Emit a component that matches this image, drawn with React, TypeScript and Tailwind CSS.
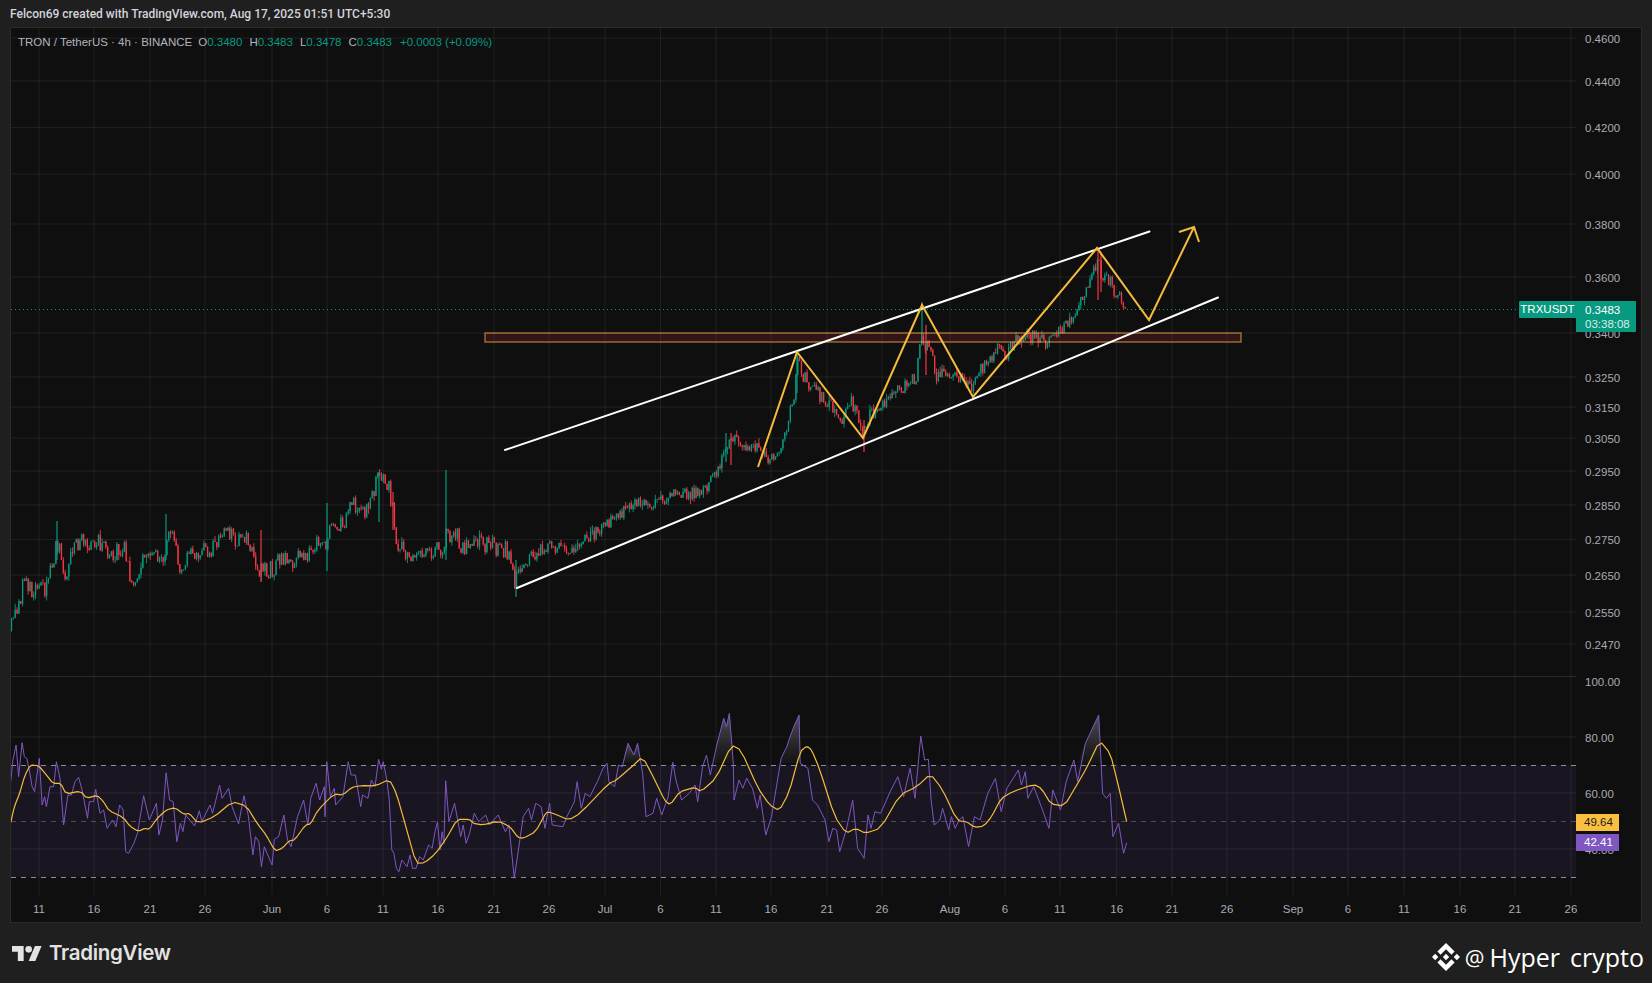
import React from "react";

const z6 = [33,540,40,480,60,470,68,400,85,420,105,430,120,380,135,420,150,370,165,300,180,290,190,400,205,340,220,300,240,260,260,310,290,270,320,320,350,300,370,300,385,390,410,370,425,300,445,320,470,310,490,330,495,230,525,300,530,370,560,310,590,310,625,300,660,240,680,245,710,275,730,250,750,320,775,370,800,360,845,320,865,350,890,320,920,310,940,280,962,285,968,260,985,240,1000,240,1030,190,1040,150,1085,185,1100,130,1120,90,1150,100,1165,200,1175,270,1190,290,1210,320,1250,325,1290,290,1315,310,1325,220,1335,280,1350,240,1365,300,1400,280,1440,280,1500,300,1515,330,1525,400,1568,320];
const shown = [520,518,540,522,560,510,580,495,600,478,620,477,640,470,665,467,680,450];
const z5 = [50,770,70,710,80,680,100,660,130,690,160,680,185,700,205,730,240,690,270,580,285,520,292,420,310,470,340,510,380,540,400,570,430,600,455,540,480,620,493,640,510,580,540,560,580,520,620,500,650,470,665,340,670,370,695,390,705,470,740,450,780,470,800,480,815,510,830,460,860,430,885,390,920,400,960,350,985,345,1020,355,1045,375,1070,340,1100,320,1130,280,1150,230,1180,150,1195,120,1210,180,1235,180,1245,250,1260,230,1272,280,1280,268];

function pairs(a: number[], fx: (x: number) => number, fy: (y: number) => number) {
  const out: [number, number][] = [];
  for (let i = 0; i < a.length; i += 2) out.push([fx(a[i]), fy(a[i + 1])]);
  return out;
}
const mid: [number, number][] = [
  ...pairs(z6, (x) => x / 2.96, (y) => 450 + y / 3),
  ...pairs(shown, (x) => x * 1.0536, (y) => y * 1.0536),
  ...pairs(z5, (x) => 700 + x / 3, (y) => 220 + y / 3),
];
function at(x: number) {
  for (let i = 1; i < mid.length; i++) {
    if (x <= mid[i][0]) {
      const [a, b] = [mid[i - 1], mid[i]];
      return a[1] + ((b[1] - a[1]) * (x - a[0])) / Math.max(b[0] - a[0], 0.01);
    }
  }
  return mid[mid.length - 1][1];
}
let seed = 77;
function rnd() {
  seed = (seed * 16807) % 2147483647;
  return seed / 2147483647;
}
type Bar = { x: number; o: number; c: number; h: number; l: number };
const bars: Bar[] = [];
{
  let prev = at(11);
  for (let x = 11.5; x <= 1127; x += 1.85) {
    const amp = x < 520 ? 9 : x < 700 ? 6 : 7;
    const c = at(x) + (rnd() - 0.5) * amp * 2;
    const h = Math.min(prev, c) - rnd() * rnd() * 6;
    const l = Math.max(prev, c) + rnd() * rnd() * 6;
    bars.push({ x, o: prev, c, h, l });
    prev = c;
  }
}
const GREEN = "#089981";
const RED = "#f23645";
const spikes: [number, number, number, string][] = [
  [327, 503, 571, GREEN], [446, 470, 560, GREEN], [516, 560, 597, GREEN], [57, 521, 560, GREEN], [166, 514, 560, GREEN],
  [922, 302, 343, GREEN], [797, 350, 393, GREEN], [864, 420, 452, RED], [1098, 250, 300, RED], [1101, 252, 292, RED],
  [379, 472, 522, GREEN], [393, 492, 530, RED], [261, 530, 582, RED], [926, 325, 375, RED], [726, 433, 462, GREEN], [731, 433, 465, RED],
];

const gridX = [39,94,150,205,272,327,383,438,494,549,605,660.5,716,771,827,882,950,1005,1060,1116.7,1172,1227,1293,1348,1404,1460,1515,1571];
const timeLabels = ["11","16","21","26","Jun","6","11","16","21","26","Jul","6","11","16","21","26","Aug","6","11","16","21","26","Sep","6","11","16","21","26"];
const prices: [string, number][] = [["0.4600",38],["0.4400",81],["0.4200",127.5],["0.4000",174],["0.3800",224],["0.3600",277],["0.3400",333],["0.3250",377],["0.3150",407],["0.3050",438],["0.2950",471],["0.2850",505],["0.2750",539.5],["0.2650",575],["0.2550",612],["0.2470",644]];
const rsiLabels: [string, number][] = [["100.00",681],["80.00",737.5],["60.00",793],["40.00",849]];

const p7 = [30,245,36,180,45,135,52,230,62,128,68,170,75,175,82,210,90,260,97,275,110,175,118,315,125,290,130,320,140,260,150,260,158,185,168,235,178,375,190,285,200,285,210,245,220,232,230,270,245,355,250,305,262,305,268,268,280,340,290,330,300,385,315,360,325,380,335,315,345,330,352,455,360,460,375,430,385,400,402,287,418,360,438,310,445,405,455,360,465,218,475,300,485,305,495,425,505,370,512,395,520,345,545,378,558,332,565,365,588,315,595,340,615,255,622,295,640,265,650,320,668,372,683,287,695,345,708,465,715,410,725,425,732,500,740,440,762,495,768,418,780,410,795,345,805,420,815,440,833,350,850,300,862,375,870,295,885,250,895,300,908,260,910,350,915,185,925,290,936,265,940,315,960,290,975,185,983,225,995,225,1010,320,1015,285,1030,295,1040,240,1050,260,1060,178,1068,208,1073,185,1083,240,1090,300,1097,450,1103,460,1110,505,1117,515,1125,480,1140,500,1148,465,1155,505,1165,505,1175,470,1185,480,1200,435,1210,445,1218,395,1225,365,1232,450,1238,395,1243,430,1248,242,1257,365,1273,310,1285,380,1290,410,1297,375,1305,430,1315,400,1328,340,1340,365,1360,345,1370,375,1395,345,1415,395,1425,375,1440,535,1465,350,1480,325,1488,360,1500,310,1515,320];
const p8 = [13,385,25,310,32,375,60,380,70,350,90,305,97,245,108,325,118,280,130,290,150,245,165,205,175,190,180,245,195,260,205,195,215,200,230,130,245,165,255,130,268,220,277,350,295,340,305,295,318,345,335,290,347,187,355,240,370,300,390,280,405,255,412,305,425,200,435,165,445,225,462,135,480,55,487,80,495,40,505,190,507,300,520,240,530,265,540,235,555,265,568,325,575,285,590,405,605,350,630,175,645,140,655,105,665,75,677,45,680,190,700,205,712,300,725,315,745,360,755,425,765,385,775,390,783,455,800,390,817,300,830,445,847,475,857,345,865,385,875,335,890,340,915,275,935,230,950,290,967,205,980,295,995,108,1005,180,1015,178,1022,300,1030,375,1045,360,1052,325,1068,390,1075,350,1085,385,1095,360,1105,350,1120,440,1135,350,1150,360,1170,280,1190,235,1205,335,1220,265,1250,210,1258,255,1268,215,1275,295,1290,260,1310,320,1330,385,1340,270,1360,330,1375,245,1395,180,1405,245,1425,130,1460,45,1470,280,1480,295,1490,280,1497,410,1512,370,1525,460,1533,428];
const y7 = [30,368,40,320,55,280,70,225,85,195,108,197,130,225,148,250,170,250,185,282,225,273,243,295,272,286,290,305,305,332,345,352,365,380,388,394,405,385,418,388,440,355,465,330,490,323,515,343,530,340,555,370,600,350,650,305,690,318,720,370,745,405,770,453,790,445,810,422,825,420,855,375,870,372,890,330,935,282,960,285,985,262,1010,257,1050,258,1090,238,1110,280,1135,375,1165,490,1190,488,1220,460,1250,415,1280,358,1315,358,1325,370,1352,375,1395,363,1428,380,1450,412,1465,415,1500,395,1525,345];
const y8 = [20,335,45,345,75,360,105,340,180,250,200,240,240,200,268,170,300,240,325,300,340,315,365,275,405,262,420,275,460,235,500,135,525,150,570,265,600,315,625,332,650,280,680,155,697,138,710,150,730,205,770,350,800,400,825,385,850,400,890,385,940,285,985,260,1020,222,1050,265,1090,362,1115,365,1135,382,1160,378,1180,350,1205,295,1235,275,1290,253,1310,265,1335,312,1370,318,1400,260,1430,200,1462,122,1490,160,1510,250,1533,365];

const fx7 = (x: number) => x / 2.8;
const fx8 = (x: number) => 540 + x / 2.613;
const fy = (y: number) => 700 + y / 3;
const toStr = (a: [number, number][]) => a.map(([x, y]) => `${x.toFixed(1)},${y.toFixed(1)}`).join(" ");
function chaikin(a: [number, number][]) {
  const out: [number, number][] = [a[0]];
  for (let i = 0; i < a.length - 1; i++) {
    out.push([a[i][0] * 0.8 + a[i + 1][0] * 0.2, a[i][1] * 0.8 + a[i + 1][1] * 0.2]);
    out.push([a[i][0] * 0.2 + a[i + 1][0] * 0.8, a[i][1] * 0.2 + a[i + 1][1] * 0.8]);
  }
  out.push(a[a.length - 1]);
  return out;
}
const purple = toStr([...pairs(p7, fx7, fy), ...pairs(p8, fx8, fy)]);
const yellow = toStr(chaikin([...pairs(y7, fx7, fy), ...pairs(y8, fx8, fy)]));
const overFills = [
  [[455,190],[462,135],[480,55],[487,80],[495,40],[505,190]],
  [[630,190],[630,175],[645,140],[655,105],[665,75],[677,45],[680,190]],
  [[1405,190],[1425,130],[1460,45],[1465,190]],
  [[215,190],[230,130],[245,165],[255,130],[262,190]],
].map((p) => toStr(p.map(([x, y]) => [fx8(x), fy(y)] as [number, number])));

const sans = "font-['Liberation_Sans',sans-serif]";

function GridV({ y1, y2 }: { y1: number; y2: number }) {
  return (
    <g stroke="#ffffff" strokeOpacity="0.07" strokeWidth="1">
      {gridX.map((x) => (
        <line key={x} x1={x} x2={x} y1={y1} y2={y2} />
      ))}
    </g>
  );
}

function PricePane() {
  return (
    <svg viewBox="11 28 1565 648" className="block w-[1565px] h-[648px]">
      <GridV y1={28} y2={676} />
      <g stroke="#ffffff" strokeOpacity="0.07" strokeWidth="1">
        {prices.map(([t, y]) => (
          <line key={t} x1={11} x2={1576} y1={y} y2={y} />
        ))}
      </g>
      <line x1={11} x2={1519} y1={309.5} y2={309.5} stroke={GREEN} strokeWidth="1" strokeDasharray="1 3" />
      {bars.map((b, i) => {
        const col = b.c < b.o ? GREEN : RED;
        return (
          <g key={i} stroke={col}>
            <line x1={b.x} x2={b.x} y1={b.h} y2={b.l} strokeWidth="0.9" />
            <line x1={b.x} x2={b.x} y1={b.o} y2={b.c} strokeWidth="1.3" />
          </g>
        );
      })}
      {spikes.map(([x, a, b, c], i) => (
        <line key={i} x1={x} x2={x} y1={a} y2={b} stroke={c} strokeWidth="1.2" />
      ))}
      <rect x={485} y={333} width={756} height={9} fill="#f23645" fillOpacity="0.15" stroke="#ffb74d" strokeOpacity="0.5" strokeWidth="1.6" />
      <g stroke="#ffffff" strokeWidth="2" strokeLinecap="round">
        <line x1={505} y1={450} x2={1149.5} y2={231.5} />
        <line x1={517} y1={588} x2={1218} y2={297.5} />
      </g>
      <polyline points="758,467 797,352 863,438 922,305 973,397 1097,248 1149,320 1194,227" fill="none" stroke="#f5bc3c" strokeWidth="2" strokeLinejoin="miter" />
      <polyline points="1179,232 1194,227 1199,242" fill="none" stroke="#f5bc3c" strokeWidth="2" />
    </svg>
  );
}

function RsiPane() {
  return (
    <svg viewBox="11 677 1565 218" className="block w-[1565px] h-[218px]">
      <defs>
        <linearGradient id="ob" x1="0" y1="0" x2="0" y2="1">
          <stop offset="0" stopColor="#6a6a72" stopOpacity="0.75" />
          <stop offset="1" stopColor="#3a3a3f" stopOpacity="0.15" />
        </linearGradient>
      </defs>
      <rect x={11} y={765} width={1565} height={112} fill="#191622" />
      <GridV y1={677} y2={895} />
      <g stroke="#ffffff" strokeOpacity="0.07" strokeWidth="1">
        {[737, 793, 849].map((y) => (
          <line key={y} x1={11} x2={1576} y1={y} y2={y} />
        ))}
      </g>
      <line x1={11} x2={1576} y1={765.5} y2={765.5} stroke="#8a8d96" strokeDasharray="5 5" />
      <line x1={11} x2={1576} y1={821.5} y2={821.5} stroke="#787b86" strokeOpacity="0.55" strokeDasharray="5 5" />
      <line x1={11} x2={1576} y1={877.5} y2={877.5} stroke="#8a8d96" strokeDasharray="5 5" />
      {overFills.map((p, i) => (
        <polygon key={i} points={p} fill="url(#ob)" />
      ))}
      <polyline points={purple} fill="none" stroke="#7e57c2" strokeWidth="1" strokeLinejoin="round" />
      <polyline points={yellow} fill="none" stroke="#f5bc3c" strokeWidth="1.2" strokeLinejoin="round" />
    </svg>
  );
}

function Legend() {
  const vals: [string, string][] = [["O", "0.3480"], ["H", "0.3483"], ["L", "0.3478"], ["C", "0.3483"]];
  return (
    <div className={`absolute left-[7px] top-[7px] flex items-center text-[11.5px] leading-[14px] text-[#b2b5be] ${sans}`}>
      <span>TRON / TetherUS · 4h · BINANCE</span>
      <span className="ml-[6px] flex gap-[7px]">
        {vals.map(([k, v]) => (
          <span key={k}>
            {k}
            <span className="text-[#089981]">{v}</span>
          </span>
        ))}
      </span>
      <span className="ml-[8px] text-[#089981]">+0.0003 (+0.09%)</span>
    </div>
  );
}

function AxisLabel({ t, y, base }: { t: string; y: number; base: number }) {
  return (
    <span className="absolute left-[9px] text-[11.5px] leading-[14px] text-[#a9abb2]" style={{ top: y - base - 6.5 }}>
      {t}
    </span>
  );
}

export default function App() {
  return (
    <div className={`w-[1652px] h-[983px] bg-[#1f1f1f] flex flex-col overflow-hidden ${sans}`}>
      <div className="h-[27px] pl-[10px] flex items-center font-['Roboto',sans-serif] text-[12px] font-medium text-[#d1d4dc]">
        Felcon69 created with TradingView.com, Aug 17, 2025 01:51 UTC+5:30
      </div>
      <div className="ml-[10px] w-[1632px] h-[896px] border border-[#2b2b2b] bg-[#0f0f0f] grid grid-cols-[1565px_65px] grid-rows-[649px_218px_27px]">
        <div className="relative border-b border-[#2a2a2a]">
          <PricePane />
          <Legend />
          <div className="absolute left-[1508px] top-[273px] w-[57px] h-[17px] bg-[#089981] rounded-l-[1px] flex items-center justify-center text-[11.5px] text-white">
            TRXUSDT
          </div>
        </div>
        <div className="relative">
          {prices.map(([t, y]) => (
            <AxisLabel key={t} t={t} y={y} base={28} />
          ))}
          <div className="absolute left-0 top-[273px] w-[60px] h-[31px] bg-[#089981] rounded-r-[1px] pl-[9px] pt-[2px] text-[11.5px] leading-[14px] text-white">
            <div>0.3483</div>
            <div className="text-[#d9efe9]">03:38:08</div>
          </div>
        </div>
        <div>
          <RsiPane />
        </div>
        <div className="relative">
          {rsiLabels.map(([t, y]) => (
            <AxisLabel key={t} t={t} y={y} base={677} />
          ))}
          <div className="absolute left-0 top-[137px] w-[43px] h-[17px] bg-[#fbbf3f] flex items-center pl-[8px] text-[11.5px] text-[#1a1a1a]">49.64</div>
          <div className="absolute left-0 top-[157px] w-[43px] h-[17px] bg-[#7e57c2] flex items-center pl-[8px] text-[11.5px] text-white">42.41</div>
        </div>
        <div className="relative">
          {gridX.map((x, i) => (
            <span key={i} className="absolute top-[7px] -translate-x-1/2 text-[11.5px] leading-[14px] text-[#a9abb2]" style={{ left: x - 11 }}>
              {timeLabels[i]}
            </span>
          ))}
        </div>
        <div />
      </div>
      <div className="flex-1 flex items-center justify-between pl-[12px] pr-[8px]">
        <div className="flex items-center gap-[7px]">
          <svg viewBox="0 0 36 18" className="w-[30px] h-[15px]" fill="#e3e3e3">
            <path d="M14 18H7V7H0V0h14v18zM28 18h-8l7.5-18h8L28 18z" />
            <circle cx="20" cy="4" r="4" />
          </svg>
          <span className="font-['Inter',sans-serif] font-semibold text-[20.5px] leading-none tracking-[-0.3px] text-[#e3e3e3]">TradingView</span>
        </div>
        <div className="flex items-center pt-[8px] text-white font-['Open_Sans',sans-serif] text-[25px] leading-none">
          <svg viewBox="0 0 126.61 126.61" className="w-[28px] h-[28px] mr-[5px]" fill="#ffffff">
            <path d="M38.73 53.2l24.59-24.58 24.6 24.6 14.3-14.31L63.32 0 24.42 38.9zM0 63.31l14.3-14.31 14.31 14.31-14.31 14.3zM38.73 73.41l24.59 24.59 24.6-24.6 14.31 14.29-38.9 38.91-38.91-38.88-.02-.02zM98 63.31l14.3-14.31 14.31 14.3-14.31 14.32zM77.83 63.3L63.32 48.78 52.59 59.51l-1.24 1.23-2.54 2.54 14.51 14.5 14.51-14.47z" />
          </svg>
          <span className="mr-[5px] text-[22px]">@</span>
          <span className="mr-[10px]">Hyper</span>
          <span>crypto</span>
        </div>
      </div>
    </div>
  );
}
